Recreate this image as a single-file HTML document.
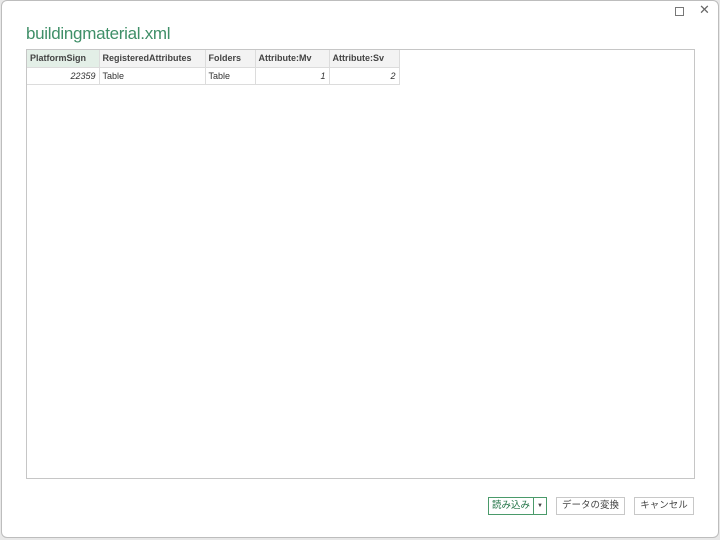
<!DOCTYPE html>
<html><head><meta charset="utf-8"><style>
*{margin:0;padding:0;box-sizing:border-box}
body{width:720px;height:540px;background:#e8e8e8;position:relative;overflow:hidden;font-family:"Liberation Sans","Noto Sans CJK JP",sans-serif}
.win{position:absolute;left:1px;top:0;width:718px;height:538px;background:#fff;border:1px solid #bdbdbd;border-radius:6px}
.title{position:absolute;left:26px;top:24px;font-size:17px;color:#3f8f68;letter-spacing:-0.3px}
.box{position:absolute;left:26px;top:49px;width:669px;height:430px;border:1px solid #c6c6c6}
table{position:absolute;left:0;top:0;border-collapse:collapse;font-size:9px;color:#333;table-layout:fixed}
td{height:17px;border:1px solid #dcdcdc;padding:0 3px;white-space:nowrap;overflow:hidden}
tr.h td{background:#f3f3f3;font-weight:bold;color:#444}
tr.h td.sel{background:#e3efe7}
.r{text-align:right;font-style:italic}
.btn{position:absolute;top:497px;height:18px;border:1px solid #c8c8c8;font-size:9.5px;color:#444;text-align:center;line-height:16px;background:#fff}
</style></head><body>
<div class="win"></div>
<div style="position:absolute;left:675px;top:7px;width:9px;height:9px;border:1px solid #777"></div>
<div style="position:absolute;left:699px;top:2px;font-size:13px;color:#666">✕</div>
<div class="title">buildingmaterial.xml</div>
<div class="box">
<table>
<colgroup><col style="width:72px"><col style="width:106px"><col style="width:50px"><col style="width:74px"><col style="width:70px"></colgroup>
<tr class="h"><td class="sel" style="border-top:none;border-left:none">PlatformSign</td><td style="border-top:none">RegisteredAttributes</td><td style="border-top:none">Folders</td><td style="border-top:none">Attribute:Mv</td><td style="border-top:none">Attribute:Sv</td></tr>
<tr><td class="r" style="border-left:none">22359</td><td>Table</td><td>Table</td><td class="r">1</td><td class="r">2</td></tr>
</table>
</div>
<div class="btn" style="left:488px;width:46px;border-color:#4a9a6a;color:#217346">読み込み</div>
<div class="btn" style="left:533px;width:14px;border-color:#4a9a6a;font-size:6px">▼</div>
<div class="btn" style="left:556px;width:69px">データの変換</div>
<div class="btn" style="left:634px;width:60px">キャンセル</div>
</body></html>
